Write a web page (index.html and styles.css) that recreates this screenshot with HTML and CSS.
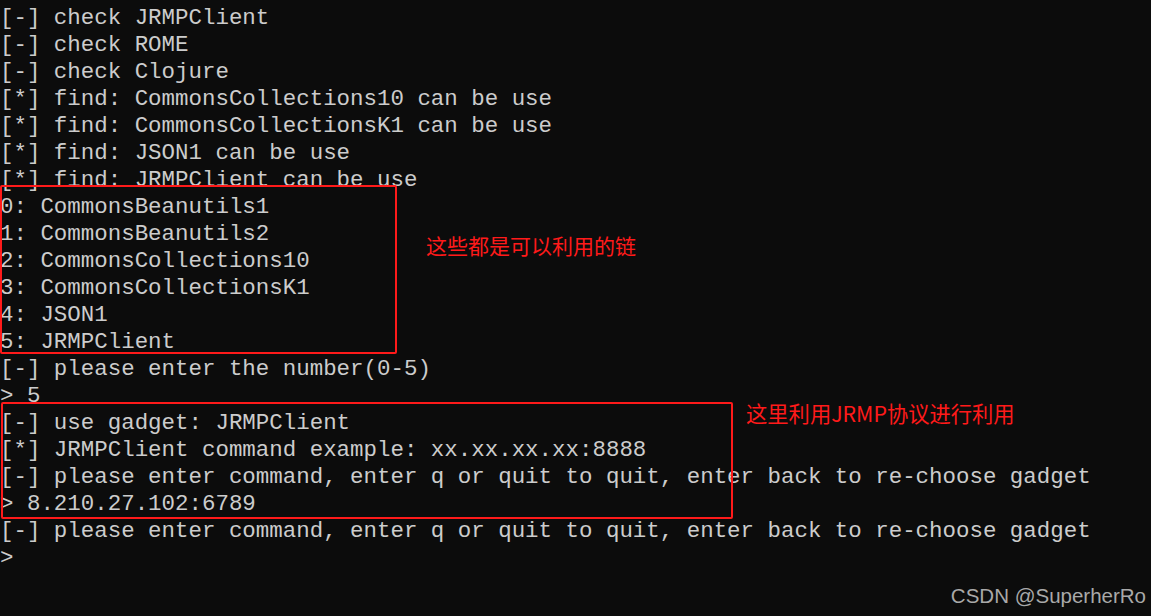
FILE: index.html
```html
<!DOCTYPE html>
<html>
<head>
<meta charset="utf-8">
<link rel="stylesheet" href="styles.css">
</head>
<body>
<div class="screen">
<div class="term">
<div class="ln">[-] check JRMPClient</div>
<div class="ln">[-] check ROME</div>
<div class="ln">[-] check Clojure</div>
<div class="ln">[*] find: CommonsCollections10 can be use</div>
<div class="ln">[*] find: CommonsCollectionsK1 can be use</div>
<div class="ln">[*] find: JSON1 can be use</div>
<div class="ln">[*] find: JRMPClient can be use</div>
<div class="ln">0: CommonsBeanutils1</div>
<div class="ln">1: CommonsBeanutils2</div>
<div class="ln">2: CommonsCollections10</div>
<div class="ln">3: CommonsCollectionsK1</div>
<div class="ln">4: JSON1</div>
<div class="ln">5: JRMPClient</div>
<div class="ln">[-] please enter the number(0-5)</div>
<div class="ln">&gt; 5</div>
<div class="ln">[-] use gadget: JRMPClient</div>
<div class="ln">[*] JRMPClient command example: xx.xx.xx.xx:8888</div>
<div class="ln">[-] please enter command, enter q or quit to quit, enter back to re-choose gadget</div>
<div class="ln">&gt; 8.210.27.102:6789</div>
<div class="ln">[-] please enter command, enter q or quit to quit, enter back to re-choose gadget</div>
<div class="ln">&gt;</div>
</div>
<div class="mark box1"></div>
<div class="mark box2"></div>
<div class="note note1">这些都是可以利用的链</div>
<div class="note note2">这里利用JRMP协议进行利用</div>
<div class="watermark">CSDN @SuperherRo</div>
</div>
</body>
</html>
```

FILE: styles.css
```css
html, body {
  margin: 0;
  padding: 0;
  background: #0c0c0c;
}
.screen {
  position: relative;
  width: 1151px;
  height: 616px;
  overflow: hidden;
  background: #0c0c0c;
}
.term {
  display: flex;
  flex-direction: column;
  align-items: flex-start;
  padding: 5px 0 0 0;
  font-family: "Liberation Mono", monospace;
  font-size: 22.45px;
  line-height: 27px;
  color: #cccccc;
}
.ln {
  white-space: pre;
  height: 27px;
}
.mark {
  position: absolute;
  border: 2.5px solid #ff1a1a;
  border-radius: 2px;
  box-sizing: border-box;
}
.box1 {
  left: 0;
  top: 185px;
  width: 397px;
  height: 169px;
}
.box2 {
  left: 1px;
  top: 402px;
  width: 732px;
  height: 117px;
}
.note {
  position: absolute;
  font-family: "Noto Sans CJK SC", sans-serif;
  font-size: 21px;
  line-height: 28px;
  color: #ff1a1a;
  white-space: nowrap;
}
.note1 {
  left: 426px;
  top: 231px;
}
.note2 {
  left: 746px;
  top: 399px;
  font-size: 21.3px;
}
.watermark {
  position: absolute;
  right: 5px;
  top: 582px;
  font-family: "Liberation Sans", Arial, sans-serif;
  font-size: 20.5px;
  line-height: 28px;
  color: #a9a9a9;
  white-space: nowrap;
}
```
